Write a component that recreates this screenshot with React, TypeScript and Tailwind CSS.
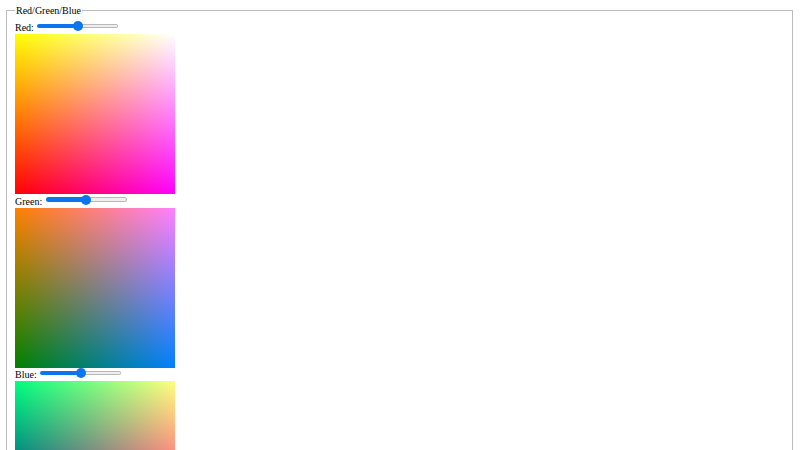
import React from 'react';

interface Channel {
  label: string;
  swatch: string;
}

// each swatch: one channel fixed, the other two swept across x and y
const channels: Channel[] = [
  {
    label: 'Red:',
    swatch:
      'bg-[#ff0000] bg-[linear-gradient(to_bottom,#00ff00,#000000),linear-gradient(to_right,#000000,#0000ff)]',
  },
  {
    label: 'Green:',
    swatch:
      'bg-[#008000] bg-[linear-gradient(to_bottom,#ff0000,#000000),linear-gradient(to_right,#000000,#0000ff)]',
  },
  {
    label: 'Blue:',
    swatch:
      'bg-[#000080] bg-[linear-gradient(to_bottom,#00ff00,#000000),linear-gradient(to_right,#000000,#ff0000)]',
  },
];

// range track: filled part, thumb, empty part
const Slider: React.FC<{ value: number }> = ({ value }) => (
  <div className="ml-[3.5px] mt-[0.5px] flex h-[10px] w-[81px] shrink-0 items-center">
    <div
      className="-mr-[5px] h-[4.5px] shrink-0 rounded-l-full bg-[#0b75f0]"
      style={{ width: `calc((100% - 10px) * ${value / 100} + 5px)` }}
    />
    <div className="relative z-10 h-[10px] w-[10px] shrink-0 rounded-full bg-[#0b75f0]" />
    <div className="-ml-[5px] h-[4.5px] flex-1 rounded-r-full border border-l-0 border-[#b8b8b8] bg-[#efefef]" />
  </div>
);

const App: React.FC = () => {
  return (
    <div className="min-h-[450px] bg-white pl-[6px] pr-[7px] pt-[5px] font-['Liberation_Serif',serif] text-[10px] text-black">
      <fieldset className="border border-[#bdbdbd] pb-[6px] pl-[8px] pr-[8px] pt-[4px]">
        <legend className="px-[1px] leading-[11.5px]">Red/Green/Blue</legend>
        {channels.map((c) => (
          <div key={c.label}>
            <div className="flex h-[13.5px]">
              <span className="mt-[1.5px] leading-[11px]">{c.label}</span>
              <Slider value={50} />
            </div>
            <div className={`h-[160px] w-[160px] bg-blend-screen ${c.swatch}`} />
          </div>
        ))}
      </fieldset>
    </div>
  );
};

export default App;
